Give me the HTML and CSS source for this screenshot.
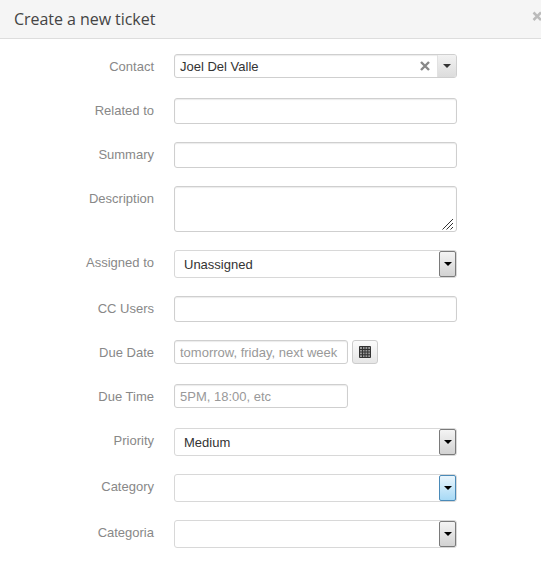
FILE: index.html
```html
<!DOCTYPE html>
<html lang="en">
<head>
  <meta charset="UTF-8" />
  <title>Create a new ticket</title>
  <link rel="stylesheet" href="styles.css">
</head>
<body>

  <!-- Header -->
  <div class="modal-header">
    <h3>Create a new ticket</h3>
    <svg class="close" width="9" height="10" viewBox="0 0 9 10"><path d="M1.5 1.5L9 9M9 1.5L1.5 9" /></svg>
  </div>

  <!-- Form -->
  <form class="modal-body">
    <div class="row row-contact">
      <label>Contact</label>
      <div class="combo">
        <span class="combo-value">Joel Del Valle</span>
        <svg class="combo-clear" width="10" height="10" viewBox="0 0 10 10"><path d="M1 1L9 9M9 1L1 9" /></svg>
        <span class="combo-arrow"><i class="caret"></i></span>
      </div>
    </div>

    <div class="row row-related">
      <label>Related to</label>
      <input type="text" class="field" />
    </div>

    <div class="row row-summary">
      <label>Summary</label>
      <input type="text" class="field" />
    </div>

    <div class="row row-description">
      <label>Description</label>
      <div class="textarea-wrap">
        <textarea class="field"></textarea>
        <svg class="grip" width="12" height="12" viewBox="0 0 12 12"><path d="M0.5 11.5L11 1M4.5 11.5L11 5M8.5 11.5L11 9" /></svg>
      </div>
    </div>

    <div class="row row-assigned">
      <label>Assigned to</label>
      <div class="select">
        <span class="select-value">Unassigned</span>
        <span class="select-arrow"><i class="caret"></i></span>
      </div>
    </div>

    <div class="row row-cc">
      <label>CC Users</label>
      <input type="text" class="field" />
    </div>

    <div class="row row-date">
      <label>Due Date</label>
      <input type="text" class="field field-short" placeholder="tomorrow, friday, next week" />
      <button type="button" class="cal-btn">
        <svg width="12" height="12" viewBox="0 0 12 12"><path d="M0.5 0.5h11v11h-11z M0.5 3.5h11 M0.5 6h11 M0.5 8.75h11 M3.5 0.5v11 M6 0.5v11 M8.75 0.5v11" /></svg>
      </button>
    </div>

    <div class="row row-time">
      <label>Due Time</label>
      <input type="text" class="field field-short" placeholder="5PM, 18:00, etc" />
    </div>

    <div class="row row-priority">
      <label>Priority</label>
      <div class="select">
        <span class="select-value">Medium</span>
        <span class="select-arrow"><i class="caret"></i></span>
      </div>
    </div>

    <div class="row row-category">
      <label>Category</label>
      <div class="select">
        <span class="select-value"></span>
        <span class="select-arrow select-arrow-hover"><i class="caret"></i></span>
      </div>
    </div>

    <div class="row row-categoria">
      <label>Categoria</label>
      <div class="select">
        <span class="select-value"></span>
        <span class="select-arrow"><i class="caret"></i></span>
      </div>
    </div>
  </form>

</body>
</html>
```

FILE: styles.css
```css
:root {
  --label: #888888;
  --border: #cfcfcf;
  --text-main: #333333;
}

* {
  box-sizing: border-box;
}

body {
  margin: 0;
  background: #ffffff;
  color: var(--text-main);
  font-family: "Liberation Sans", Arial, sans-serif;
  font-size: 13px;
  overflow: hidden;
}

.modal-header {
  height: 39px;
  background: #f5f5f5;
  border-bottom: 1px solid #dddddd;
  padding: 0 0 0 14px;
  display: flex;
  align-items: center;
  justify-content: space-between;
}

.modal-header h3 {
  margin: 0;
  font-family: "Open Sans", sans-serif;
  font-size: 16px;
  font-weight: 400;
  letter-spacing: -0.05px;
  color: #444444;
}

.close {
  margin-top: -6px;
}

.close path {
  fill: none;
  stroke: #bbbbbb;
  stroke-width: 2.5;
}

.modal-body {
  padding: 15px 0 0 0;
}

.row {
  display: flex;
  align-items: flex-start;
  margin-bottom: 20px;
}

.row label {
  width: 154px;
  margin-right: 20px;
  padding-top: 5px;
  text-align: right;
  color: var(--label);
}

.field {
  display: block;
  width: 283px;
  height: 26px;
  padding: 4px 5px;
  border: 1px solid var(--border);
  border-radius: 3px;
  outline: none;
  font-family: inherit;
  font-size: 13px;
  color: var(--text-main);
  box-shadow: inset 0 1px 1px rgba(0, 0, 0, 0.08);
}

.field::placeholder {
  color: #999999;
  opacity: 1;
}

.field-short {
  width: 174px;
  height: 24px;
}

.textarea-wrap {
  position: relative;
}

textarea.field {
  height: 46px;
  resize: none;
}

.grip {
  position: absolute;
  right: 3px;
  bottom: 2px;
}

.grip path {
  fill: none;
  stroke: #333333;
  stroke-width: 1;
}

.row-contact,
.row-summary,
.row-date,
.row-time {
  height: 24px;
}

.row-related,
.row-description,
.row-cc,
.row-priority,
.row-assigned,
.row-category {
  margin-bottom: 18px;
}

/* Contact combo */
.combo {
  display: flex;
  align-items: stretch;
  width: 283px;
  height: 24px;
  border: 1px solid var(--border);
  border-radius: 3px;
  overflow: hidden;
  box-shadow: inset 0 1px 1px rgba(0, 0, 0, 0.08);
}

.combo-value {
  flex: 1;
  padding: 4px 5px;
  color: var(--text-main);
}

.combo-clear {
  align-self: center;
  margin-right: 7px;
}

.combo-clear path {
  fill: none;
  stroke: #888888;
  stroke-width: 2.4;
}

.combo-arrow {
  width: 19px;
  display: flex;
  align-items: center;
  justify-content: center;
  border-left: 1px solid #e2e2e2;
  background: linear-gradient(#f2f2f2, #dcdcdc);
}

.caret {
  width: 0;
  height: 0;
  border-left: 4px solid transparent;
  border-right: 4px solid transparent;
  border-top: 4px solid #222222;
}

.combo-arrow .caret {
  border-top-color: #333333;
}

/* Native looking selects */
.select {
  display: flex;
  width: 283px;
  height: 28px;
  border: 1px solid #d8d8d8;
  border-radius: 3px;
}

.select-value {
  flex: 1;
  padding: 6px 9px;
  color: var(--text-main);
}

.select-arrow {
  width: 17px;
  display: flex;
  align-items: center;
  justify-content: center;
  border: 1px solid #7a7a7a;
  border-radius: 2px;
  background: linear-gradient(#f4f4f4, #d2d2d2);
}

.select-arrow .caret {
  border-top-color: #000000;
}

.select-arrow-hover {
  border-color: #4a8ab8;
  background: linear-gradient(#eaf6fd, #a7d9f5);
}

/* Calendar button */
.cal-btn {
  display: flex;
  align-items: center;
  justify-content: center;
  width: 26px;
  height: 24px;
  margin-left: 4px;
  padding: 0;
  border: 1px solid #cccccc;
  border-radius: 3px;
  background: linear-gradient(#fbfbfb, #e6e6e6);
}

.cal-btn path {
  fill: #999999;
  stroke: #333333;
  stroke-width: 1;
}
```
